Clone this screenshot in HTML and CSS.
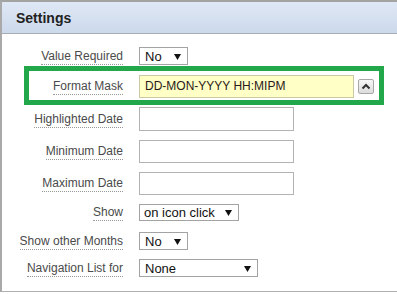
FILE: index.html
```
<!DOCTYPE html>
<html>
<head>
<meta charset="utf-8">
<link rel="stylesheet" href="styles.css">
</head>
<body>
<div class="panel">
  <div class="header"><span class="title">Settings</span></div>
  <div class="body">
    <div class="row">
      <div class="label"><span>Value Required</span></div>
      <div class="select w49"><span>No</span><svg class="arrow" width="7" height="6" viewBox="0 0 7 6"><polygon points="0,0 7,0 3.5,6" fill="#111"/></svg></div>
    </div>
    <div class="row fm">
      <div class="label"><span>Format Mask</span></div>
      <div class="input yellow">DD-MON-YYYY HH:MIPM</div>
      <div class="btn"><svg width="10" height="7" viewBox="0 0 10 7"><path d="M1.5 5.5 L5 2 L8.5 5.5" fill="none" stroke="#333" stroke-width="2"/></svg></div>
    </div>
    <div class="row">
      <div class="label"><span>Highlighted Date</span></div>
      <div class="input tall"></div>
    </div>
    <div class="row">
      <div class="label"><span>Minimum Date</span></div>
      <div class="input"></div>
    </div>
    <div class="row">
      <div class="label"><span>Maximum Date</span></div>
      <div class="input"></div>
    </div>
    <div class="row">
      <div class="label"><span>Show</span></div>
      <div class="select w100 short"><span>on icon click</span><svg class="arrow" width="7" height="6" viewBox="0 0 7 6"><polygon points="0,0 7,0 3.5,6" fill="#111"/></svg></div>
    </div>
    <div class="row som">
      <div class="label"><span>Show other Months</span></div>
      <div class="select w49"><span>No</span><svg class="arrow" width="7" height="6" viewBox="0 0 7 6"><polygon points="0,0 7,0 3.5,6" fill="#111"/></svg></div>
    </div>
    <div class="row">
      <div class="label"><span>Navigation List for</span></div>
      <div class="select w118"><span>None</span><svg class="arrow" width="7" height="6" viewBox="0 0 7 6"><polygon points="0,0 7,0 3.5,6" fill="#111"/></svg></div>
    </div>
  </div>
</div>
</body>
</html>
```
FILE: styles.css
```
html, body {
  margin: 0;
  padding: 0;
  background: #fff;
}
body {
  font-family: "Liberation Sans", Arial, sans-serif;
  width: 397px;
  height: 294px;
  overflow: hidden;
}
.panel {
  border-left: 2px solid #a9a9a9;
  border-top: 2px solid #a3a3a3;
  border-bottom: 1px solid #b0b0b0;
  width: 395px;
}
.header {
  height: 31px;
  border-bottom: 1px solid #a6adb5;
  background: linear-gradient(#dfe8f5, #ccd9ec);
  display: flex;
  align-items: center;
  padding-left: 14px;
}
.title {
  font-weight: bold;
  font-size: 14px;
  color: #222;
}
.body {
  display: flex;
  flex-direction: column;
  gap: 9px;
  padding-top: 13px;
  padding-bottom: 14px;
}
.row {
  display: flex;
  align-items: center;
}
.row.fm {
  margin-top: 1px;
  position: relative;
}
.row.fm::after {
  content: "";
  position: absolute;
  left: 22px;
  top: -9px;
  width: 350px;
  height: 29px;
  border: 5px solid #22a84a;
}
.row.som {
  margin-top: 2px;
}
.label {
  width: 121px;
  margin-right: 16px;
  text-align: right;
  font-size: 12px;
  color: #4a4a4a;
  line-height: 15px;
}
.label span {
  border-bottom: 1px dotted #999;
  padding-bottom: 1px;
}
.select {
  box-sizing: border-box;
  height: 18px;
  border: 1px solid #a3a3a3;
  background: #fff;
  display: flex;
  align-items: center;
  justify-content: space-between;
  padding: 0 6px 0 5px;
  font-size: 13px;
  color: #111;
}
.select.short {
  height: 17px;
  padding-left: 4px;
}
.select.w49 { width: 49px; }
.select.w100 { width: 100px; }
.select.w118 { width: 119px; }
.arrow {
  margin-top: 1px;
}
.input {
  box-sizing: border-box;
  width: 155px;
  height: 23px;
  border: 1px solid #b3b3b3;
  background: #fff;
}
.input.tall {
  height: 24px;
}
.input.yellow {
  width: 215px;
  background: #ffffc6;
  border-color: #c9c9a6;
  font-size: 12px;
  color: #2a1a1a;
  line-height: 21px;
  padding-left: 5px;
}
.btn {
  box-sizing: border-box;
  margin-left: 4px;
  width: 16px;
  height: 15px;
  border: 1px solid #a8a8a8;
  border-radius: 2px;
  background: linear-gradient(#f7f7f7, #dcdcdc);
  display: flex;
  align-items: center;
  justify-content: center;
}
```
